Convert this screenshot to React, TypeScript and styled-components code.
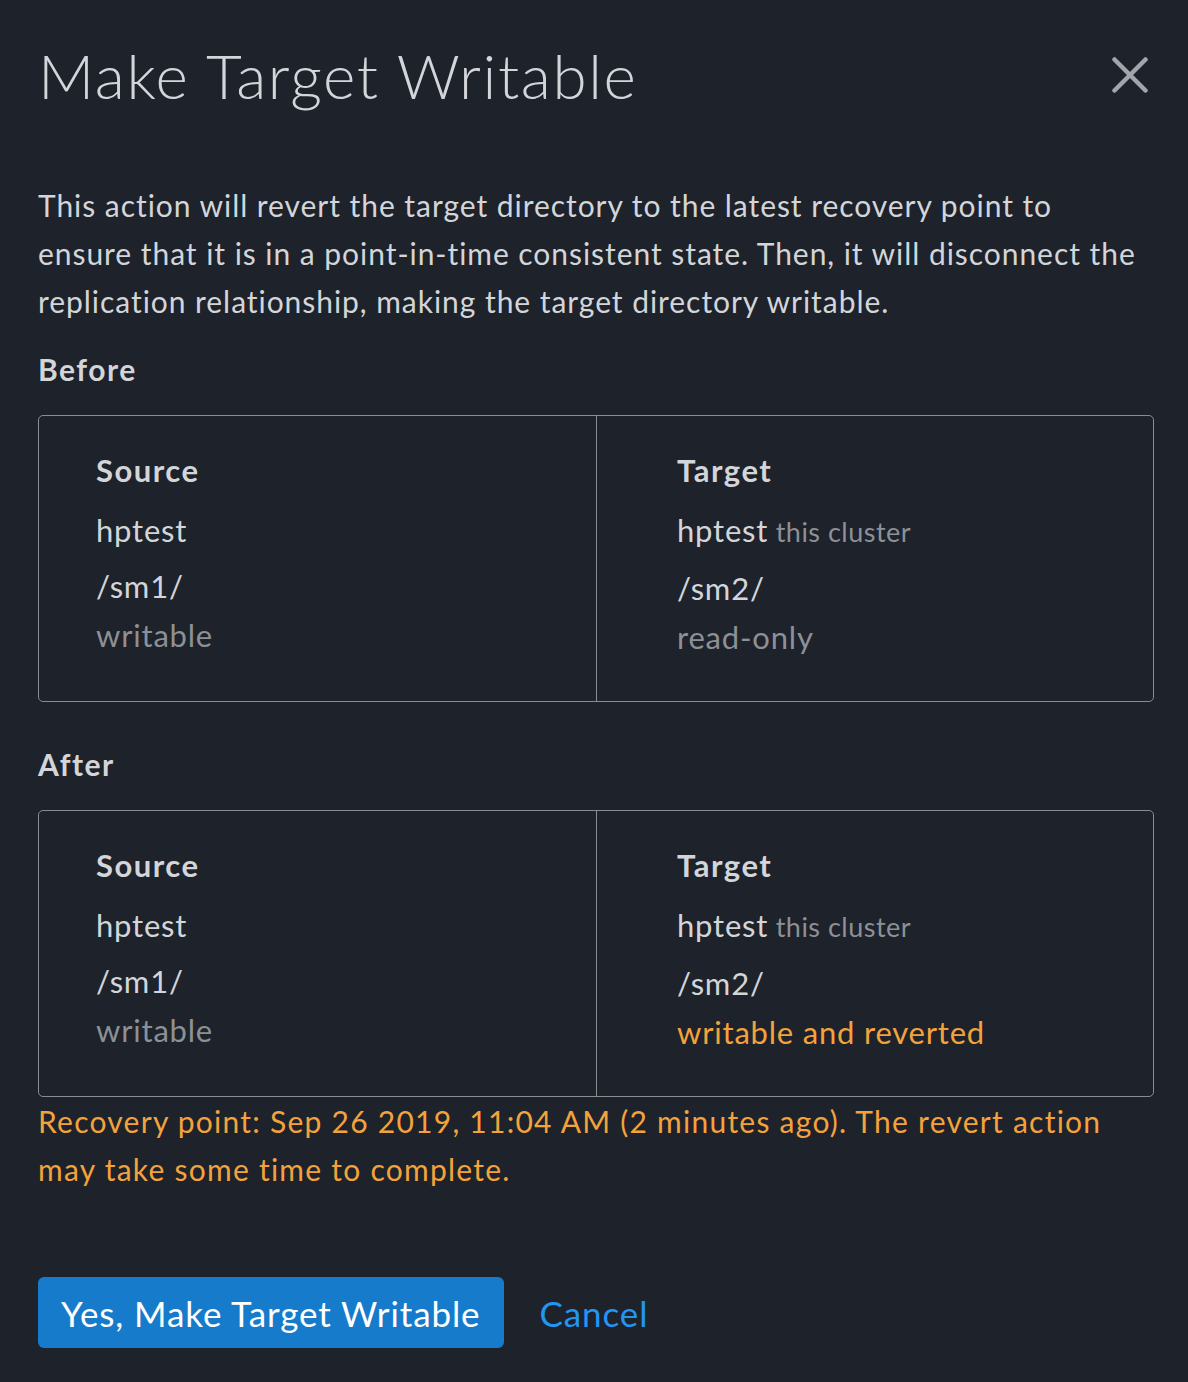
import React from "react";
import styled, { createGlobalStyle } from "styled-components";

const COLOR = {
  bg: "#1d222b",
  text: "#d3d5d9",
  muted: "#8d9095",
  border: "#8a8c90",
  orange: "#f4a23b",
  blue: "#167bcb",
  link: "#2395f2",
  close: "#a2a5aa"
};

const FONT = `"Lato", "Noto Sans", sans-serif`;

const GlobalStyle = createGlobalStyle`
  html, body {
    margin: 0;
    padding: 0;
    background: ${COLOR.bg};
  }
  body {
    font-family: ${FONT};
    color: ${COLOR.text};
  }
`;

const Dialog = styled.div`
  width: 1188px;
  min-height: 1382px;
  box-sizing: border-box;
  padding: 36px 34px 34px 38px;
  background: ${COLOR.bg};
`;

const Header = styled.div`
  display: flex;
  align-items: center;
  justify-content: space-between;
  height: 78px;
`;

const Title = styled.h1`
  margin: 0;
  font-family: ${FONT};
  font-weight: 300;
  font-size: 62px;
  line-height: 78px;
  letter-spacing: 1.6px;
  color: ${COLOR.text};
`;

const CloseButton = styled.button`
  display: flex;
  align-items: center;
  justify-content: center;
  width: 48px;
  height: 48px;
  padding: 0;
  border: none;
  background: none;
  cursor: pointer;
`;

const Description = styled.p`
  margin: 67px 0 0 0;
  font-size: 30px;
  line-height: 48px;
  letter-spacing: 0.95px;
  white-space: nowrap;
  color: ${COLOR.text};
`;

const SectionLabel = styled.h4<{ gap: number }>`
  margin: ${props => props.gap}px 0 0 0;
  font-size: 30px;
  font-weight: 700;
  line-height: 48px;
  letter-spacing: 1.5px;
  color: ${COLOR.text};
`;

const Box = styled.div`
  display: grid;
  grid-template-columns: 1fr 1fr;
  margin-top: 22px;
  border: 1px solid ${COLOR.border};
  border-radius: 5px;
  width: 1116px;
  box-sizing: border-box;
`;

const Column = styled.div<{ inset: number; divided?: boolean }>`
  padding: 34px 20px 44px ${props => props.inset}px;
  border-left: ${props => (props.divided ? `1px solid ${COLOR.border}` : "none")};
`;

const ColumnTitle = styled.div`
  font-size: 31px;
  font-weight: 700;
  line-height: 40px;
  letter-spacing: 1.5px;
  margin-bottom: 20px;
  color: ${COLOR.text};
`;

const ClusterLine = styled.div`
  font-size: 31px;
  line-height: 40px;
  letter-spacing: 0.8px;
  margin-bottom: 16px;
  color: ${COLOR.text};

  span {
    font-size: 27px;
    letter-spacing: 0.5px;
    color: ${COLOR.muted};
  }
`;

const PathLine = styled.div`
  font-size: 31px;
  line-height: 40px;
  letter-spacing: 0.8px;
  margin-bottom: 9px;
  color: ${COLOR.text};
`;

const StateLine = styled.div<{ warn?: boolean }>`
  font-size: 31px;
  line-height: 40px;
  letter-spacing: 0.8px;
  color: ${props => (props.warn ? COLOR.orange : COLOR.muted)};
`;

const Warning = styled.p`
  margin: 0;
  font-size: 30px;
  line-height: 48px;
  letter-spacing: 1.25px;
  white-space: nowrap;
  color: ${COLOR.orange};
`;

const Actions = styled.div`
  display: flex;
  align-items: center;
  gap: 36px;
  margin-top: 84px;
`;

const PrimaryButton = styled.button`
  height: 71px;
  padding: 0 23px;
  border: none;
  border-radius: 6px;
  background: ${COLOR.blue};
  color: #ffffff;
  font-family: ${FONT};
  font-size: 35px;
  letter-spacing: 0.9px;
  cursor: pointer;
`;

const LinkButton = styled.button`
  padding: 0;
  border: none;
  background: none;
  color: ${COLOR.link};
  font-family: ${FONT};
  font-size: 35px;
  letter-spacing: 0.9px;
  cursor: pointer;
`;

type Side = {
  cluster: string;
  local?: boolean;
  path: string;
  state: string;
  warn?: boolean;
};

const Relationship = ({ source, target }: { source: Side; target: Side }) => (
  <Box>
    {[source, target].map((side, i) => (
      <Column key={i} inset={i === 0 ? 57 : 80} divided={i === 1}>
        <ColumnTitle>{i === 0 ? "Source" : "Target"}</ColumnTitle>
        <ClusterLine>
          {side.cluster}
          {side.local && <span> this cluster</span>}
        </ClusterLine>
        <PathLine>{side.path}</PathLine>
        <StateLine warn={side.warn}>{side.state}</StateLine>
      </Column>
    ))}
  </Box>
);

export default function App() {
  return (
    <Dialog>
      <GlobalStyle />
      <Header>
        <Title>Make Target Writable</Title>
        <CloseButton aria-label="close">
          <svg width="36" height="36" viewBox="0 0 36 36">
            <path
              d="M2.5 2.5 L33.5 33.5 M33.5 2.5 L2.5 33.5"
              stroke={COLOR.close}
              strokeWidth="4.5"
              strokeLinecap="round"
            />
          </svg>
        </CloseButton>
      </Header>
      <Description>
        This action will revert the target directory to the latest recovery point to
        <br />
        ensure that it is in a point-in-time consistent state. Then, it will disconnect the
        <br />
        replication relationship, making the target directory writable.
      </Description>

      <SectionLabel gap={20}>Before</SectionLabel>
      <Relationship
        source={{ cluster: "hptest", path: "/sm1/", state: "writable" }}
        target={{ cluster: "hptest", local: true, path: "/sm2/", state: "read-only" }}
      />

      <SectionLabel gap={38}>After</SectionLabel>
      <Relationship
        source={{ cluster: "hptest", path: "/sm1/", state: "writable" }}
        target={{
          cluster: "hptest",
          local: true,
          path: "/sm2/",
          state: "writable and reverted",
          warn: true
        }}
      />
      <Warning>
        Recovery point: Sep 26 2019, 11:04 AM (2 minutes ago). The revert action
        <br />
        may take some time to complete.
      </Warning>

      <Actions>
        <PrimaryButton>Yes, Make Target Writable</PrimaryButton>
        <LinkButton>Cancel</LinkButton>
      </Actions>
    </Dialog>
  );
}
